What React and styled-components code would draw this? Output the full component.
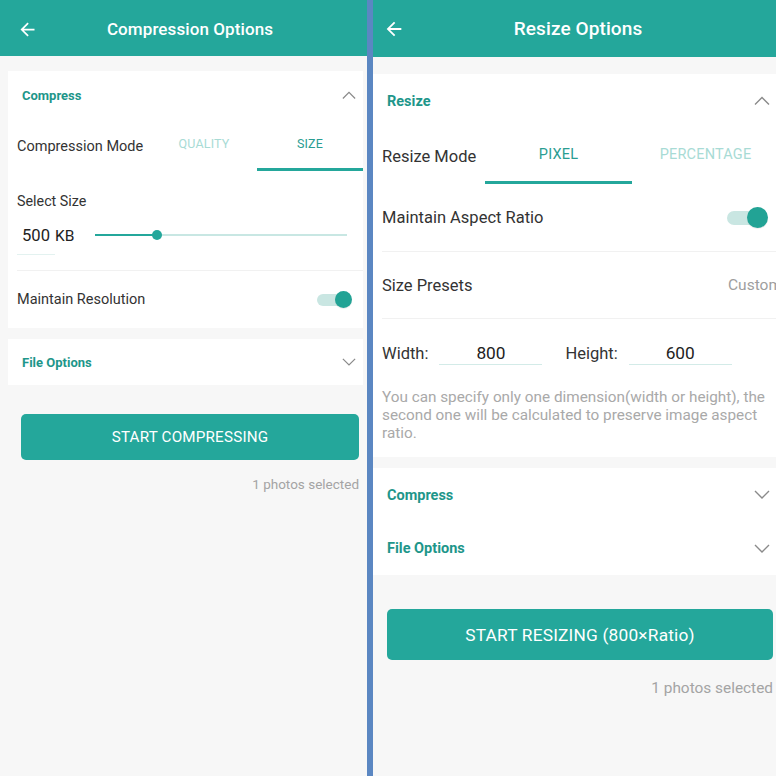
import React from "react";
import styled, { createGlobalStyle } from "styled-components";

const Global = createGlobalStyle`
  html, body { margin: 0; padding: 0; background: #f7f7f7; }
  body { font-family: Roboto, "Noto Sans", "Liberation Sans", sans-serif; }
  * { box-sizing: border-box; }
`;

const TEAL = "#24a79b";
const TEAL_TEXT = "#1e968a";

const Screen = styled.div`
  display: flex;
  width: 776px;
  height: 776px;
  overflow: hidden;
  background: #f7f7f7;
`;

const Panel = styled.div`
  width: ${(p) => p.$w}px;
  flex-shrink: 0;
  display: flex;
  flex-direction: column;
  background: #f7f7f7;
`;

const Divider = styled.div`
  width: 6px;
  flex-shrink: 0;
  background: #5b87c2;
`;

const Header = styled.header`
  height: ${(p) => p.$h}px;
  background: ${TEAL};
  display: grid;
  grid-template-columns: 1fr auto 1fr;
  align-items: center;
  color: #fff;
`;

const Back = styled.div`
  display: flex;
  align-items: center;
  padding-left: ${(p) => p.$pl}px;
  padding-top: ${(p) => p.$pt || 0}px;
`;

const Title = styled.h1`
  margin: 0 0 0 ${(p) => p.$shift || 0}px;
  font-size: ${(p) => p.$fs}px;
  font-weight: 500;
  padding-top: ${(p) => p.$pt || 0}px;
  white-space: nowrap;
  letter-spacing: 0.1px;
`;

const Body = styled.div`
  display: flex;
  flex-direction: column;
  padding: ${(p) => p.$pad};
`;

const Card = styled.section`
  background: #fff;
  display: flex;
  flex-direction: column;
  margin-top: ${(p) => p.$mt || 0}px;
`;

const SectionHead = styled.div`
  height: ${(p) => p.$h}px;
  display: flex;
  align-items: center;
  justify-content: space-between;
  padding: 0 ${(p) => p.$pr}px 0 ${(p) => p.$pl}px;
`;

const SectionTitle = styled.span`
  font-size: ${(p) => p.$fs}px;
  font-weight: 700;
  color: ${TEAL_TEXT};
`;

const ModeRow = styled.div`
  height: ${(p) => p.$h}px;
  display: flex;
  align-items: stretch;
  padding: 0 ${(p) => p.$pr || 0}px 0 ${(p) => p.$pl}px;
`;

const Label = styled.span`
  flex: 1;
  display: flex;
  align-items: center;
  font-size: ${(p) => p.$fs}px;
  color: #333;
  white-space: nowrap;
  padding-top: ${(p) => p.$pt || 0}px;
`;

const Tab = styled.div`
  width: ${(p) => p.$w}px;
  display: flex;
  align-items: center;
  justify-content: center;
  font-size: ${(p) => p.$fs}px;
  color: ${(p) => (p.$active ? "#2a9d92" : "#a8dbd5")};
  border-bottom: 3px solid ${(p) => (p.$active ? TEAL : "transparent")};
  letter-spacing: 0.2px;
`;

const SizeBlock = styled.div`
  padding: 22px 0 0 9px;
  display: flex;
  flex-direction: column;
`;

const SmallLabel = styled.span`
  font-size: 14.3px;
  line-height: 17px;
  color: #333;
`;

const ValueRow = styled.div`
  display: flex;
  align-items: flex-start;
  margin-top: 15px;
`;

const Amount = styled.span`
  width: 38px;
  font-size: 16.6px;
  line-height: 22px;
  padding: 0 0 7px 5px;
  border-bottom: 1px solid #e3f2f0;
  color: #222;
`;

const Unit = styled.span`
  font-size: 15.5px;
  line-height: 22px;
  color: #222;
`;

const Slider = styled.div`
  position: relative;
  flex: 1;
  height: 2px;
  margin: 9px 16px 0 21px;
  background: #c8e7e3;
`;

const SliderFill = styled.div`
  height: 100%;
  background: ${TEAL};
`;

const SliderThumb = styled.div`
  position: absolute;
  top: -4px;
  width: 10px;
  height: 10px;
  margin-left: -5px;
  border-radius: 50%;
  background: ${TEAL};
`;

const Rule = styled.div`
  height: 1px;
  background: #f1f1f1;
  margin-left: 9px;
  margin-top: ${(p) => p.$mt || 0}px;
`;

const OptionRow = styled.div`
  height: ${(p) => p.$h}px;
  display: flex;
  align-items: center;
  justify-content: space-between;
  padding: 0 ${(p) => p.$pr}px 0 9px;
`;

const SideValue = styled.span`
  font-size: 15.5px;
  color: #9e9e9e;
  white-space: nowrap;
`;

const Switch = styled.div`
  position: relative;
  width: ${(p) => p.$w}px;
  height: ${(p) => p.$d}px;
  flex-shrink: 0;
  &::before {
    content: "";
    position: absolute;
    left: 0;
    right: 2px;
    top: 50%;
    height: ${(p) => p.$th}px;
    transform: translateY(-50%);
    border-radius: 999px;
    background: #c9e6e2;
  }
`;

const SwitchThumb = styled.div`
  position: absolute;
  right: 0;
  top: 0;
  width: ${(p) => p.$d}px;
  height: ${(p) => p.$d}px;
  border-radius: 50%;
  background: #22a395;
  box-shadow: 0 1px 1px rgba(0, 0, 0, 0.08);
`;

const DimRow = styled.div`
  display: flex;
  align-items: flex-end;
  padding: 23px 0 0 9px;
`;

const DimLabel = styled.span`
  font-size: 16.5px;
  line-height: 22px;
  color: #333;
  margin-left: ${(p) => p.$ml || 0}px;
`;

const DimInput = styled.span`
  width: 103px;
  margin-left: ${(p) => p.$ml}px;
  text-align: center;
  font-size: 17.3px;
  line-height: 22px;
  color: #222;
  border-bottom: 1px solid #d3ebe8;
`;

const Helper = styled.p`
  margin: 23px 6px 15px 9px;
  font-size: 15.3px;
  line-height: 18px;
  color: #a9a9a9;
`;

const Button = styled.button`
  margin: ${(p) => p.$mt}px 0 0 ${(p) => p.$ml}px;
  width: ${(p) => p.$w}px;
  height: ${(p) => p.$h}px;
  border: none;
  border-radius: 5px;
  background: ${TEAL};
  color: #fff;
  font-family: inherit;
  font-size: ${(p) => p.$fs}px;
  letter-spacing: 0.2px;
  display: flex;
  align-items: center;
  justify-content: center;
`;

const Caption = styled.div`
  margin-top: ${(p) => p.$mt}px;
  padding-right: ${(p) => p.$pr}px;
  text-align: right;
  font-size: ${(p) => p.$fs}px;
  line-height: 16px;
  color: #a4a4a4;
`;

const Arrow = ({ size }) => (
  <svg width={size} height={size} viewBox="0 0 24 24" fill="#fff">
    <path d="M20 11H7.83l5.59-5.59L12 4l-8 8 8 8 1.41-1.41L7.83 13H20v-2z" />
  </svg>
);

const Chevron = ({ up, w }) => (
  <svg width={w} height={w * 0.6} viewBox="0 0 16 9.6" fill="none">
    <polyline
      points={up ? "1,8.6 8,1.6 15,8.6" : "1,1 8,8 15,1"}
      stroke="#8a8a8a"
      strokeWidth="1.4"
    />
  </svg>
);

function CompressionScreen() {
  return (
    <Panel $w={367}>
      <Header $h={56}>
        <Back $pl={17} $pt={2}>
          <Arrow size={21} />
        </Back>
        <Title $fs={17} $shift={13} $pt={2}>Compression Options</Title>
        <span />
      </Header>
      <Body $pad="15px 4px 0 8px">
        <Card>
          <SectionHead $h={48} $pl={14} $pr={7}>
            <SectionTitle $fs={13}>Compress</SectionTitle>
            <Chevron up w={14} />
          </SectionHead>
          <ModeRow $h={52} $pl={9}>
            <Label $fs={14.5} $pt={3}>Compression Mode</Label>
            <Tab $w={106} $fs={12.5}>QUALITY</Tab>
            <Tab $w={106} $fs={12.5} $active>SIZE</Tab>
          </ModeRow>
          <SizeBlock>
            <SmallLabel>Select Size</SmallLabel>
            <ValueRow>
              <Amount>500</Amount>
              <Unit>KB</Unit>
              <Slider>
                <SliderFill style={{ width: "24.3%" }} />
                <SliderThumb style={{ left: "24.3%" }} />
              </Slider>
            </ValueRow>
          </SizeBlock>
          <Rule $mt={15} />
          <OptionRow $h={57} $pr={11}>
            <Label $fs={14.5}>Maintain Resolution</Label>
            <Switch $w={35} $d={17} $th={12}>
              <SwitchThumb $d={17} />
            </Switch>
          </OptionRow>
        </Card>
        <Card $mt={11}>
          <SectionHead $h={46} $pl={14} $pr={7}>
            <SectionTitle $fs={13}>File Options</SectionTitle>
            <Chevron w={14} />
          </SectionHead>
        </Card>
        <Button $mt={29} $ml={13} $w={338} $h={46} $fs={15.2}>
          START COMPRESSING
        </Button>
        <Caption $mt={16} $pr={4} $fs={13.5}>
          1 photos selected
        </Caption>
      </Body>
    </Panel>
  );
}

function ResizeScreen() {
  return (
    <Panel $w={410}>
      <Header $h={57}>
        <Back $pl={10}>
          <Arrow size={22} />
        </Back>
        <Title $fs={19}>Resize Options</Title>
        <span />
      </Header>
      <Body $pad="17px 0 0 0">
        <Card>
          <SectionHead $h={54} $pl={14} $pr={13}>
            <SectionTitle $fs={14.5}>Resize</SectionTitle>
            <Chevron up w={16} />
          </SectionHead>
          <ModeRow $h={56} $pl={9} $pr={4}>
            <Label $fs={16.5} $pt={1}>Resize Mode</Label>
            <Tab $w={147} $fs={14.5} $active>PIXEL</Tab>
            <Tab $w={147} $fs={14.5}>PERCENTAGE</Tab>
          </ModeRow>
          <OptionRow $h={67} $pr={15}>
            <Label $fs={16.5}>Maintain Aspect Ratio</Label>
            <Switch $w={41} $d={21} $th={14}>
              <SwitchThumb $d={21} />
            </Switch>
          </OptionRow>
          <Rule />
          <OptionRow $h={66} $pr={1}>
            <Label $fs={16.5}>Size Presets</Label>
            <SideValue>Custom</SideValue>
          </OptionRow>
          <Rule />
          <DimRow>
            <DimLabel>Width:</DimLabel>
            <DimInput $ml={11}>800</DimInput>
            <DimLabel $ml={23}>Height:</DimLabel>
            <DimInput $ml={11}>600</DimInput>
          </DimRow>
          <Helper>
            You can specify only one dimension(width or height), the second
            one will be calculated to preserve image aspect ratio.
          </Helper>
        </Card>
        <Card $mt={11}>
          <SectionHead $h={54} $pl={14} $pr={13}>
            <SectionTitle $fs={14.5}>Compress</SectionTitle>
            <Chevron w={16} />
          </SectionHead>
          <SectionHead $h={53} $pl={14} $pr={13}>
            <SectionTitle $fs={14.5}>File Options</SectionTitle>
            <Chevron w={16} />
          </SectionHead>
        </Card>
        <Button $mt={34} $ml={14} $w={386} $h={51} $fs={17.3}>
          START RESIZING (800×Ratio)
        </Button>
        <Caption $mt={20} $pr={10} $fs={15.4}>
          1 photos selected
        </Caption>
      </Body>
    </Panel>
  );
}

export default function App() {
  return (
    <>
      <Global />
      <Screen>
        <CompressionScreen />
        <Divider />
        <ResizeScreen />
      </Screen>
    </>
  );
}
